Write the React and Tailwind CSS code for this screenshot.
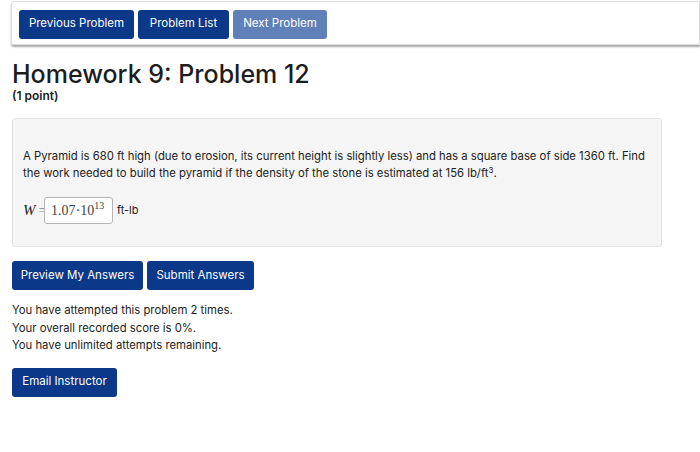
import React from "react";

function Btn({ children, light, className = "" }) {
  return (
    <button
      className={`h-[29px] whitespace-nowrap flex items-center justify-center rounded-[3px] text-white text-[11.5px] ${light ? "bg-[#5f80b8]" : "bg-[#0b3889]"} ${className}`}
    >
      {children}
    </button>
  );
}

export default function App() {
  return (
    <div className="min-h-screen bg-white text-[#222] font-['Inter','Helvetica',sans-serif]">
      {/* nav bar */}
      <div className="ml-[11px] mt-[1px] h-[44px] border border-[#dedede] rounded-l-[3px] shadow-[0_2px_2px_rgba(0,0,0,0.35)] flex items-center pl-[7px] pt-[2px] gap-[4px]">
        <Btn className="w-[115px]">Previous Problem</Btn>
        <Btn className="w-[91px]">Problem List</Btn>
        <Btn light className="w-[94px]">Next Problem</Btn>
      </div>

      <div className="px-[12px]">
        <h1 className="mt-[15px] text-[25px] leading-[28px] font-medium text-[#1d1d1d]">Homework 9: Problem 12</h1>
        <div className="text-[12px] leading-[14px] font-semibold mt-[1px]">(1 point)</div>

        {/* problem box */}
        <div className="mt-[15px] w-[650px] h-[129px] bg-[#f5f5f5] border border-[#e4e4e4] rounded-[3px] px-[10px] pt-[29px] text-[11.3px] leading-[17px] text-[#222]">
          <p>
            A Pyramid is 680 ft high (due to erosion, its current height is slightly less) and has a square base of side 1360 ft. Find the work needed to build the pyramid if the density of the stone is estimated at 156 lb/ft<sup className="text-[8px] leading-none -top-[4px]">3</sup>.
          </p>
          <div className="mt-[15px] flex items-center">
            <span className="font-['Liberation_Serif',serif] italic text-[15px]">W</span>
            <span className="font-['Liberation_Serif',serif] text-[15px] ml-[3px] -mr-[3px] text-[#888]">=</span>
            <span className="h-[27px] w-[69px] bg-white border border-[#b5b5b5] rounded-[3px] flex items-center pl-[6px] font-['Liberation_Serif',serif] text-[14px] text-[#444]">
              1.07·10<sup className="text-[10px] leading-none -top-[5px]">13</sup>
            </span>
            <span className="ml-[4px] text-[11px]">ft-lb</span>
          </div>
        </div>

        <div className="mt-[14px] flex gap-[4px]">
          <Btn className="w-[131px]">Preview My Answers</Btn>
          <Btn className="w-[107px]">Submit Answers</Btn>
        </div>

        <div className="mt-[12px] text-[11.3px] leading-[17.5px] text-[#222]">
          <div>You have attempted this problem 2 times.</div>
          <div>Your overall recorded score is 0%.</div>
          <div>You have unlimited attempts remaining.</div>
        </div>

        <Btn className="mt-[13px] w-[105px]">Email Instructor</Btn>
      </div>
    </div>
  );
}
